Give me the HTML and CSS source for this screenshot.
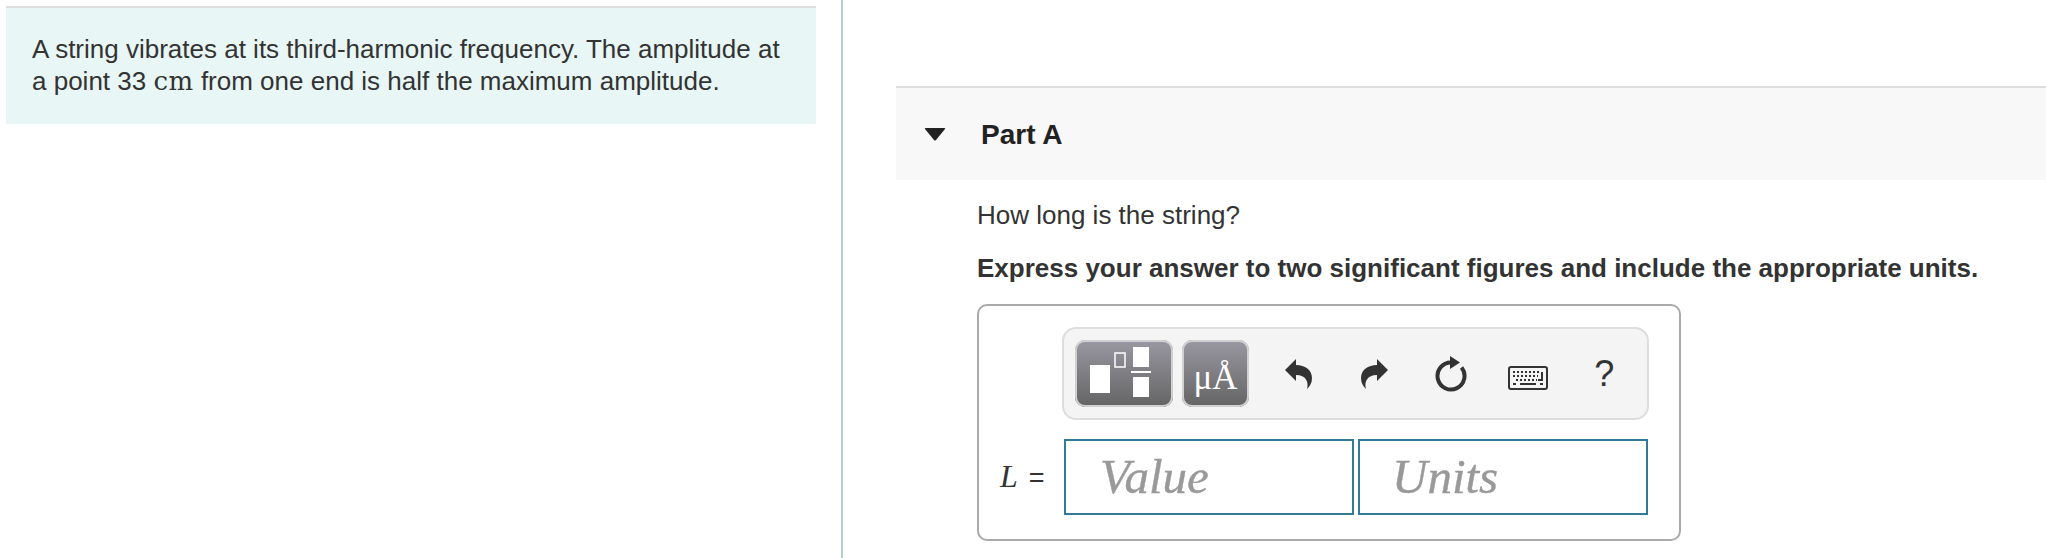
FILE: index.html
```html
<!DOCTYPE html>
<html lang="en">
<head>
    <meta charset="UTF-8">
    <title>Part A</title>
    <link rel="stylesheet" href="styles.css">
</head>
<body>
    <div class="left-pane">
        <div class="intro">
            A string vibrates at its third-harmonic frequency. The amplitude at<br>
            a point 33 <span class="math-unit">cm</span> from one end is half the maximum amplitude.
        </div>
    </div>

    <div class="right-pane">
        <div class="part-header">
            <svg class="caret" width="22" height="13" viewBox="0 0 22 13"><path d="M1 1 Q0 0 2 0 H20 Q22 0 21 1 L12 12 Q11 13 10 12 Z" fill="#222"/></svg>
            <h2 class="part-title">Part A</h2>
        </div>

        <div class="part-body">
            <p class="question">How long is the string?</p>
            <p class="instruction">Express your answer to two significant figures and include the appropriate units.</p>

            <div class="answer-box">
                <div class="toolbar">
                    <div class="tool-btn tool-btn-wide">
                        <svg width="98" height="67" viewBox="0 0 98 67">
                            <rect x="15" y="25" width="20" height="28" fill="#fff"/>
                            <rect x="40" y="13" width="10" height="14" fill="none" stroke="#fff" stroke-width="1.5"/>
                            <rect x="58" y="7" width="16" height="20" fill="#fff"/>
                            <rect x="56" y="31" width="20" height="2" fill="#fff"/>
                            <rect x="58" y="37" width="16" height="20" fill="#fff"/>
                        </svg>
                    </div>
                    <div class="tool-btn tool-btn-units">μÅ</div>

                    <div class="tool">
                        <svg width="27" height="31" viewBox="0 0 27 31"><path d="M0 12 L11 1 V7 C20 7 27 12 27 20 C27 25 25 28 22 31 C24 24 21 17 11 17 V23 Z" fill="#333"/></svg>
                    </div>
                    <div class="tool">
                        <svg width="27" height="31" viewBox="0 0 27 31"><path d="M27 12 L16 1 V7 C7 7 0 12 0 20 C0 25 2 28 5 31 C3 24 6 17 16 17 V23 Z" fill="#333"/></svg>
                    </div>
                    <div class="tool">
                        <svg width="32" height="36" viewBox="0 0 32 36">
                            <path d="M16 6.5 A13.5 13.5 0 1 0 26.5 11.5" fill="none" stroke="#333" stroke-width="4"/>
                            <path d="M15 0 L25 6.5 L15 13 Z" fill="#333"/>
                        </svg>
                    </div>
                    <div class="tool tool-keyboard">
                        <svg width="40" height="24" viewBox="0 0 40 24">
                            <rect x="1" y="1" width="38" height="22" rx="2" fill="none" stroke="#333" stroke-width="2"/>
                            <path d="M5 6 H32 M5 10 H30 M8 14 H29" stroke="#333" stroke-width="2" stroke-dasharray="2 2" fill="none"/>
                            <path d="M34 6 V14 H30 M5 18 H8 M32 18 H35 M12 18 H28" stroke="#333" stroke-width="2" fill="none"/>
                        </svg>
                    </div>
                    <div class="tool tool-help">?</div>
                </div>

                <div class="answer-row">
                    <div class="answer-label"><i>L</i> <span class="equals">=</span></div>
                    <div class="answer-input">Value</div>
                    <div class="answer-input answer-input-units">Units</div>
                </div>
            </div>
        </div>
    </div>
</body>
</html>
```

FILE: styles.css
```css
html, body {
    height: 100%;
}

body {
    margin: 0;
    display: flex;
    overflow: hidden;
    background-color: #fff;
    font-family: "Liberation Sans", Arial, sans-serif;
    color: #333;
}

.left-pane {
    width: 843px;
    height: 558px;
    box-sizing: border-box;
    padding: 6px 25px 0 6px;
    border-right: 2px solid #b9cadd;
}

.intro {
    height: 118px;
    box-sizing: border-box;
    padding: 25px 26px 0;
    border-top: 2px solid #ddd;
    background-color: #e8f6f6;
    font-size: 26px;
    line-height: 32px;
}

.math-unit {
    font-family: "DejaVu Serif", serif;
    font-size: 26px;
    line-height: 1;
    letter-spacing: 0.5px;
}

.right-pane {
    flex: 1;
    padding: 86px 0 0 53px;
}

.part-header {
    display: flex;
    align-items: center;
    height: 92px;
    border-top: 2px solid #ddd;
    background-color: #f8f8f8;
    color: #222;
}

.caret {
    margin-left: 28px;
}

.part-title {
    margin: 2px 0 0 35px;
    font-size: 28px;
    font-weight: bold;
}

.part-body {
    padding: 18px 0 0 81px;
    font-size: 26px;
    line-height: 34px;
}

.question {
    margin: 0;
}

.instruction {
    margin: 19px 0 0;
    font-weight: bold;
}

.answer-box {
    width: 704px;
    height: 237px;
    box-sizing: border-box;
    margin-top: 19px;
    padding: 21px 0 0 83px;
    border: 2px solid #aaa;
    border-radius: 10px;
}

.toolbar {
    display: flex;
    align-items: center;
    width: 587px;
    height: 93px;
    box-sizing: border-box;
    padding-left: 11px;
    background-color: #f4f4f4;
    border: 2px solid #ddd;
    border-radius: 14px;
}

.tool-btn {
    height: 67px;
    box-sizing: border-box;
    border-radius: 10px;
    background: linear-gradient(#9a98a2, #646464);
    box-shadow: inset 0 0 0 2px #d0d0d0;
}

.tool-btn-wide {
    width: 98px;
    margin-right: 9px;
}

.tool-btn-units {
    width: 67px;
    margin-right: 11px;
    text-align: center;
    font-family: "Liberation Serif", serif;
    font-size: 35px;
    line-height: 76px;
    color: #fff;
}

.tool {
    display: flex;
    justify-content: center;
    align-items: center;
    width: 76.5px;
}

.tool-keyboard {
    margin-top: 8px;
}

.tool-help {
    font-size: 36px;
}

.answer-row {
    display: flex;
    align-items: center;
    margin: 19px 0 0 -62px;
}

.answer-label {
    width: 64px;
    font-family: "Liberation Serif", serif;
    font-size: 32px;
}

.equals {
    margin-left: 3px;
    font-family: "Liberation Sans", Arial, sans-serif;
    font-size: 27px;
}

.answer-input {
    width: 290px;
    height: 76px;
    box-sizing: border-box;
    padding-left: 34px;
    border: 2px solid #337a99;
    font-family: "Liberation Serif", serif;
    font-style: italic;
    font-size: 49px;
    line-height: 72px;
    color: #999;
    -webkit-text-stroke: 0.4px #999;
}

.answer-input-units {
    margin-left: 4px;
    padding-left: 32px;
}
```
